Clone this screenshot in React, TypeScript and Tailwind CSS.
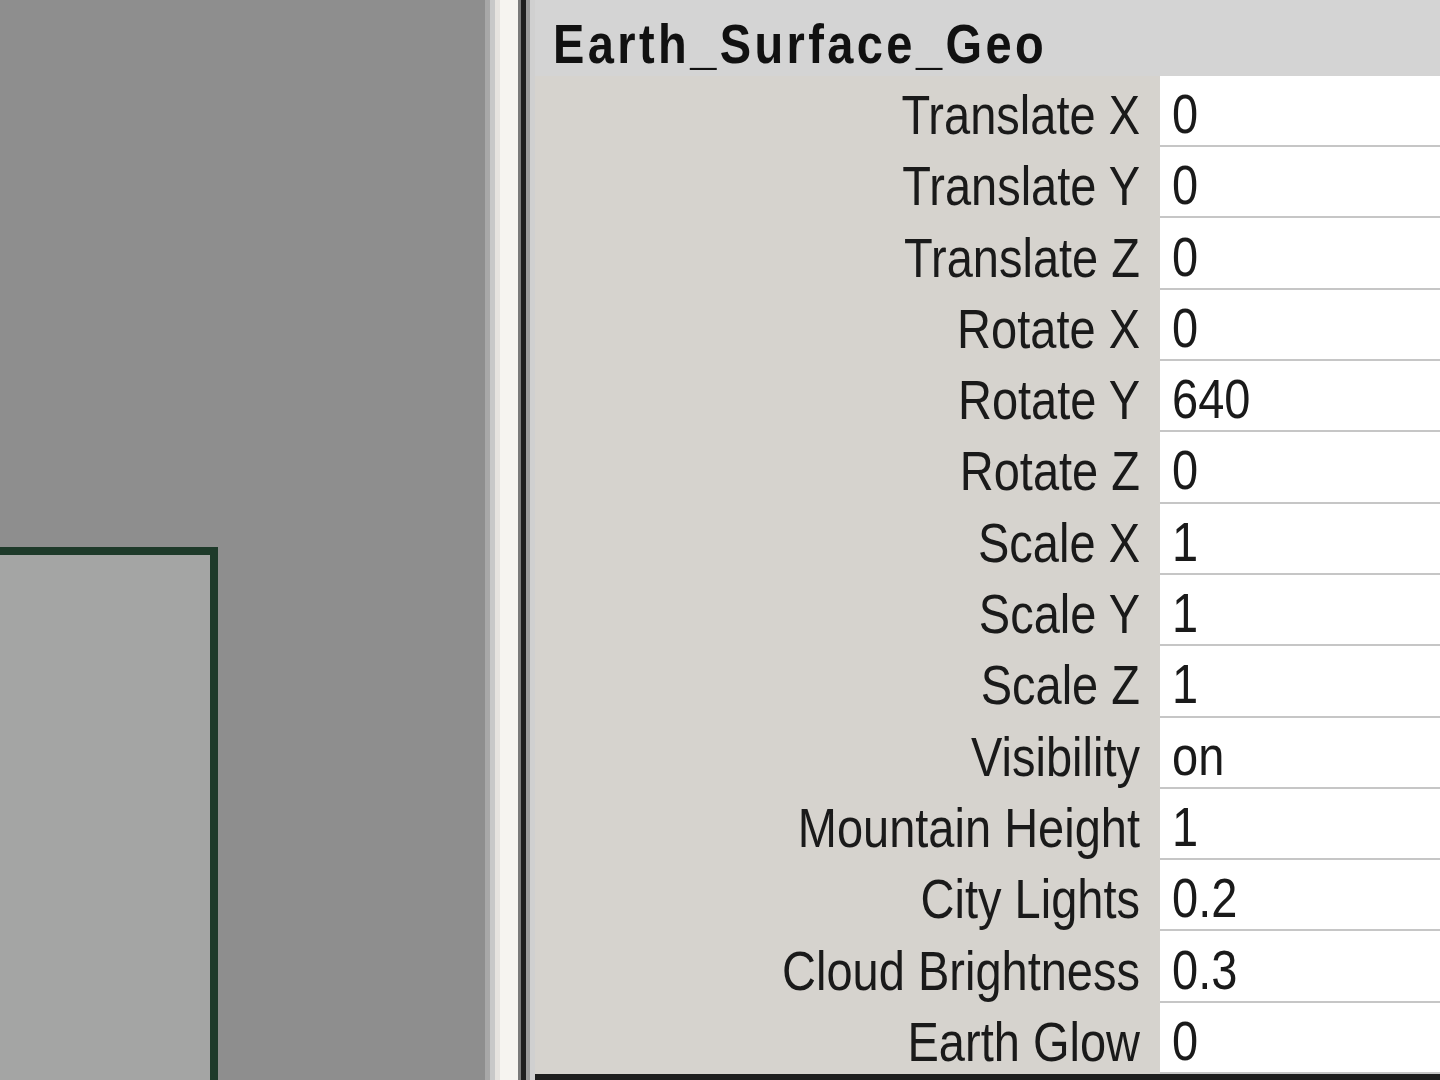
import React from "react";

const rows: [string, string][] = [
  ["Translate X", "0"],
  ["Translate Y", "0"],
  ["Translate Z", "0"],
  ["Rotate X", "0"],
  ["Rotate Y", "640"],
  ["Rotate Z", "0"],
  ["Scale X", "1"],
  ["Scale Y", "1"],
  ["Scale Z", "1"],
  ["Visibility", "on"],
  ["Mountain Height", "1"],
  ["City Lights", "0.2"],
  ["Cloud Brightness", "0.3"],
  ["Earth Glow", "0"],
];

export default function App() {
  return (
    <div
      className="flex h-[1080px] w-[1440px] overflow-hidden"
      style={{ fontFamily: '"Liberation Sans", Arial, sans-serif' }}
    >
      {/* viewport */}
      <div className="flex w-[485px] flex-col bg-[#8e8e8e]">
        <div className="h-[547px]" />
        <div className="w-[218px] flex-1 border-t-[8px] border-r-[8px] border-[#1e3a2a] bg-[#a4a5a4]" />
      </div>
      {/* divider */}
      <div className="w-[5px] bg-[#a8a8a8]" />
      <div className="w-[5px] bg-[#c8c8c8]" />
      <div className="w-[5px] bg-[#e6e3df]" />
      <div className="w-[18px] bg-[#f6f4f0]" />
      <div className="w-[3px] bg-[#7a7a7a]" />
      <div className="w-[5px] bg-[#1e1e1e]" />
      <div className="w-[4px] bg-[#9a9a9a]" />
      <div className="w-[5px] bg-[#d0d0d0]" />
      {/* channel box */}
      <div className="flex flex-1 flex-col bg-[#d6d3ce]">
        <div className="flex h-[76px] items-center bg-[#d4d4d4] pl-[18px] pt-[12px]">
          <span className="inline-block origin-center scale-y-[1.18] text-[47px] font-bold leading-none tracking-[3.4px] text-[#111]">
            Earth_Surface_Geo
          </span>
        </div>
        <div className="flex flex-1 flex-col border-b-[6px] border-[#1e1e1e]">
          {rows.map(([label, value]) => (
            <div key={label} className="flex h-[71.3px]">
              <div className="flex w-[625px] items-center justify-end bg-[#d6d3ce] pr-[20px] pt-[6px]">
                <span className="inline-block scale-y-[1.18] text-[47px] leading-none text-[#1a1a1a]">
                  {label}
                </span>
              </div>
              <div className="flex flex-1 items-center border-b-[2px] border-[#c6c6c6] bg-white pl-[12px] pt-[6px]">
                <span className="inline-block scale-y-[1.18] text-[47px] leading-none text-[#1a1a1a]">
                  {value}
                </span>
              </div>
            </div>
          ))}
        </div>
      </div>
    </div>
  );
}
